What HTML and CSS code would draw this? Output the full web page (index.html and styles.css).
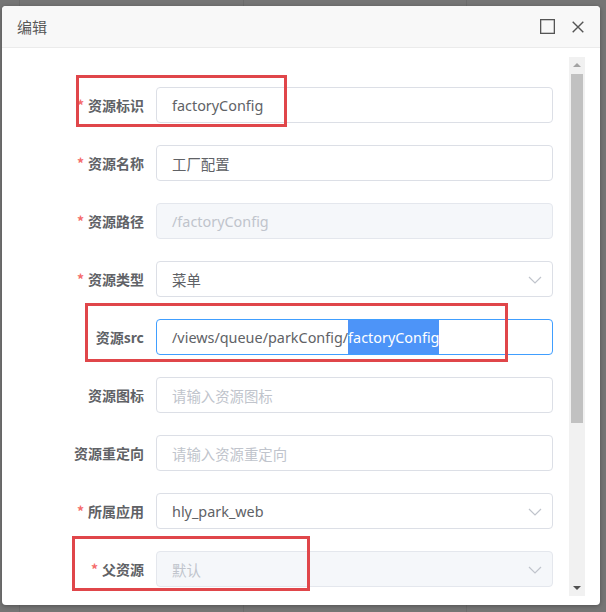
FILE: index.html
```html
<!DOCTYPE html>
<html lang="zh-CN">
<head>
    <meta charset="UTF-8">
    <title>编辑</title>
    <link rel="stylesheet" href="styles.css">
</head>
<body>
    <div class="dialog">
        <header class="dialog-header">
            <span class="dialog-title">编辑</span>
            <div class="dialog-tools">
                <svg width="15" height="15" viewBox="0 0 15 15"><rect x="0.65" y="0.65" width="13.7" height="13.7" fill="none" stroke="#555" stroke-width="1.3"/></svg>
                <svg width="12" height="12" viewBox="0 0 12 12"><path d="M0.7 0.7 L11.3 11.3 M11.3 0.7 L0.7 11.3" stroke="#555" stroke-width="1.4" fill="none"/></svg>
            </div>
        </header>

        <div class="dialog-body">
            <div class="scroller">
                <form class="form">
                    <div class="form-item">
                        <label class="required">资源标识</label>
                        <div class="input">factoryConfig</div>
                    </div>
                    <div class="form-item">
                        <label class="required">资源名称</label>
                        <div class="input">工厂配置</div>
                    </div>
                    <div class="form-item">
                        <label class="required">资源路径</label>
                        <div class="input disabled">/factoryConfig</div>
                    </div>
                    <div class="form-item">
                        <label class="required">资源类型</label>
                        <div class="input select">菜单
                            <svg class="arrow" width="14" height="8" viewBox="0 0 14 8"><path d="M1 1 L7 7 L13 1" stroke="#c0c4cc" stroke-width="1.2" fill="none"/></svg>
                        </div>
                    </div>
                    <div class="form-item">
                        <label>资源src</label>
                        <div class="input focused">/views/queue/parkConfig/<span class="selected">factoryConfig</span></div>
                    </div>
                    <div class="form-item">
                        <label>资源图标</label>
                        <div class="input placeholder">请输入资源图标</div>
                    </div>
                    <div class="form-item">
                        <label>资源重定向</label>
                        <div class="input placeholder">请输入资源重定向</div>
                    </div>
                    <div class="form-item">
                        <label class="required">所属应用</label>
                        <div class="input select">hly_park_web
                            <svg class="arrow" width="14" height="8" viewBox="0 0 14 8"><path d="M1 1 L7 7 L13 1" stroke="#c0c4cc" stroke-width="1.2" fill="none"/></svg>
                        </div>
                    </div>
                    <div class="form-item">
                        <label class="required">父资源</label>
                        <div class="input select disabled">默认
                            <svg class="arrow" width="14" height="8" viewBox="0 0 14 8"><path d="M1 1 L7 7 L13 1" stroke="#c0c4cc" stroke-width="1.2" fill="none"/></svg>
                        </div>
                    </div>
                </form>

                <div class="scrollbar">
                    <div class="scroll-btn"><span class="tri up"></span></div>
                    <div class="scroll-track"><div class="scroll-thumb"></div></div>
                    <div class="scroll-btn"><span class="tri down"></span></div>
                </div>
            </div>
        </div>

        <!-- annotation boxes -->
        <div class="mark mark-1"></div>
        <div class="mark mark-2"></div>
        <div class="mark mark-3"></div>
    </div>
</body>
</html>
```

FILE: styles.css
```css
html, body {
    margin: 0;
    height: 100%;
}
body {
    background: #757575;
    background-image:
        linear-gradient(90deg, transparent 19px, #6c6c6c 19px, #6c6c6c 20px, transparent 20px),
        linear-gradient(90deg, transparent 243px, #6c6c6c 243px, #6c6c6c 244px, transparent 244px),
        linear-gradient(90deg, transparent 466px, #6c6c6c 466px, #6c6c6c 467px, transparent 467px);
    font-family: "Noto Sans", "Noto Sans CJK SC", sans-serif;
    overflow: hidden;
}

.dialog {
    position: relative;
    margin: 6px 0 0 2px;
    width: 598px;
    height: 599px;
    background: #ffffff;
    border-radius: 4px;
    overflow: hidden;
    box-shadow: 0 1px 4px rgba(0, 0, 0, .3);
}

.dialog-header {
    height: 41px;
    background: #f8f8f8;
    border-bottom: 1px solid #ebebeb;
    display: flex;
    align-items: center;
    justify-content: space-between;
    padding: 0 16px 0 15px;
}
.dialog-title {
    font-family: "Noto Sans CJK SC", sans-serif;
    font-size: 15px;
    color: #595959;
}
.dialog-tools {
    display: flex;
    align-items: center;
    gap: 17px;
}

.dialog-body {
    padding: 9px 15px 9px 0;
}
.scroller {
    display: flex;
    height: 539px;
    overflow: hidden;
}

.form {
    flex: 1;
    padding: 30px 16px 0 0;
}
.form-item {
    display: flex;
    align-items: center;
    height: 36px;
    margin-bottom: 22px;
}
.form-item label {
    width: 142px;
    padding-right: 12px;
    text-align: right;
    font-family: "Noto Sans CJK SC", sans-serif;
    font-size: 14px;
    font-weight: 700;
    color: #606266;
}
.form-item label.required::before {
    content: '*';
    color: #f56c6c;
    margin-right: 4px;
}

.input {
    position: relative;
    flex: 1;
    height: 36px;
    box-sizing: border-box;
    border: 1px solid #dcdfe6;
    border-radius: 4px;
    padding: 0 15px;
    display: flex;
    align-items: center;
    font-size: 14.4px;
    color: #606266;
    white-space: nowrap;
}
.input.placeholder {
    color: #c0c4cc;
}
.input.disabled {
    background: #f5f7fa;
    border-color: #e4e7ed;
    color: #c0c4cc;
}
.input.focused {
    border-color: #409eff;
}
.input .selected {
    background: #4d94f8;
    color: #ffffff;
    align-self: stretch;
    display: flex;
    align-items: center;
}
.input .arrow {
    position: absolute;
    right: 10px;
    top: 14px;
}

.scrollbar {
    width: 16px;
    background: #f1f1f1;
    display: flex;
    flex-direction: column;
}
.scroll-btn {
    height: 16px;
    display: flex;
    align-items: center;
    justify-content: center;
}
.tri {
    width: 0;
    height: 0;
    border-left: 4px solid transparent;
    border-right: 4px solid transparent;
}
.tri.up {
    border-bottom: 4px solid #a3a3a3;
}
.tri.down {
    border-top: 4px solid #505050;
}
.scroll-track {
    flex: 1;
    padding: 1px 2px 0;
}
.scroll-thumb {
    height: 349px;
    background: #c1c1c1;
}

.mark {
    position: absolute;
    border: 3px solid #e0464a;
}
.mark-1 {
    left: 74px;
    top: 69px;
    width: 205px;
    height: 46px;
}
.mark-2 {
    left: 83px;
    top: 297px;
    width: 417px;
    height: 53px;
}
.mark-3 {
    left: 70px;
    top: 530px;
    width: 232px;
    height: 49px;
}
```
